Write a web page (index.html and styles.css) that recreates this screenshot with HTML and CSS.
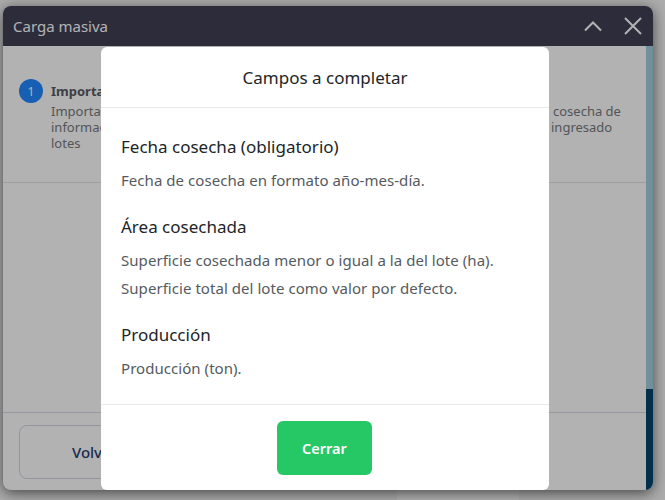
FILE: index.html
```html
<!DOCTYPE html>
<html lang="es">
<head>
<meta charset="utf-8">
<title>Carga masiva</title>
<link rel="stylesheet" href="styles.css">
</head>
<body>
<div class="ghost"></div>
<div class="desktop">
  <div class="window">
    <header class="window-head">
      <span class="window-title">Carga masiva</span>
      <div class="window-actions">
        <svg class="icon" width="20" height="20" viewBox="0 0 20 20"><path d="M2 14.5 10 6.5 18 14.5" fill="none" stroke="#fff" stroke-width="2"/></svg>
        <svg class="icon" width="20" height="20" viewBox="0 0 20 20"><path d="M2 2 18 18M18 2 2 18" fill="none" stroke="#fff" stroke-width="2"/></svg>
      </div>
    </header>
    <div class="window-body">
      <div class="main">
        <div class="steps">
          <div class="step">
            <span class="step-num">1</span>
            <div class="step-text">
              <strong class="step-title">Importar</strong>
              <p class="step-desc">Importar archivo con<br>información de los<br>lotes</p>
            </div>
          </div>
          <p class="step-right"><span class="step-line">cosecha de</span><br>ingresado</p>
        </div>
        <div class="content"></div>
        <div class="foot">
          <button class="btn-back">Volver</button>
        </div>
      </div>
      <div class="scrollbar"><div class="thumb"></div></div>
    </div>
  </div>
</div>
<div class="backdrop"></div>
<div class="modal">
  <div class="modal-head">Campos a completar</div>
  <div class="modal-body">
    <h3 class="field">Fecha cosecha (obligatorio)</h3>
    <p class="desc">Fecha de cosecha en formato año-mes-día.</p>
    <h3 class="field">Área cosechada</h3>
    <p class="desc">Superficie cosechada menor o igual a la del lote (ha).</p>
    <p class="desc">Superficie total del lote como valor por defecto.</p>
    <h3 class="field">Producción</h3>
    <p class="desc">Producción (ton).</p>
  </div>
  <div class="modal-foot"><button class="btn-close">Cerrar</button></div>
</div>
</body>
</html>
```

FILE: styles.css
```css
* { box-sizing: border-box; }
html, body { margin: 0; height: 100%; }
body {
  width: 665px;
  height: 500px;
  overflow: hidden;
  position: relative;
  font-family: "Noto Sans", sans-serif;
  background: #f6f6f6;
}
.ghost { position: absolute; left: 397px; top: 486px; width: 122px; height: 14px; background: #fff; }
.desktop { position: relative; height: 500px; padding: 6px 12px 10px 3px; }
.window {
  height: 484px;
  display: flex;
  flex-direction: column;
  border-radius: 8px;
  overflow: hidden;
  box-shadow: 0 3px 14px rgba(0,0,0,.6);
  background: #fff;
}
.window-head {
  height: 40px;
  flex: none;
  background: #404055;
  color: #fff;
  display: flex;
  align-items: center;
  justify-content: space-between;
  padding: 0 10px;
}
.window-title { font-size: 15px; }
.window-actions { display: flex; gap: 20px; }
.window-body { flex: 1; display: flex; min-height: 0; }
.main { flex: 1; display: flex; flex-direction: column; }
.steps {
  height: 137px;
  padding: 33px 16px 0;
  display: flex;
  justify-content: space-between;
  border-bottom: 1px solid #e2e2e2;
}
.step { display: flex; gap: 8px; }
.step-num {
  width: 24px; height: 24px; border-radius: 50%;
  background: #1583ff; color: #fff; font-size: 12px; opacity: .95;
  display: flex; align-items: center; justify-content: center;
}
.step-title { font-size: 13px; color: #5a5a64; line-height: 24px; display: block; }
.step-desc, .step-right { margin: 0; font-size: 13px; line-height: 16px; color: #777a80; }
.step-right { margin-top: 24px; width: 79px; }
.step-line { margin-left: 2px; }
.content { flex: 1; }
.foot { height: 78px; border-top: 1px solid #d8d8e4; padding: 12px 16px; }
.btn-back {
  width: 151px; height: 54px; background: #fff; border: 1px solid #d4d4e0; border-radius: 8px;
  font: 500 15px "Noto Sans", sans-serif; color: #2a3a72;
}
.scrollbar { width: 7px; background: #a3cee3; position: relative; }
.thumb { position: absolute; left: 0; right: 0; bottom: 0; top: 343px; background: #04466c; }
.backdrop { position: absolute; inset: 0; background: rgba(0,0,0,.3); }
.modal {
  position: absolute; left: 101px; top: 47px; width: 448px; height: 443px;
  background: #fff; border-radius: 6px;
  display: flex; flex-direction: column;
}
.modal-head {
  height: 61px; flex: none; display: flex; align-items: center; justify-content: center;
  font-size: 17px; color: #212529; border-bottom: 1px solid #e9e9e9;
}
.modal-body { flex: 1; padding: 27px 20px 0; }
.field { margin: 0 0 11px; font-size: 17px; font-weight: 400; line-height: 24px; color: #212529; }
.desc { margin: 0 0 8px; font-size: 15px; line-height: 20px; color: #555a60; letter-spacing: .05px; }
.desc + .field { margin-top: 25px; }
.modal-foot {
  height: 86px; flex: none; border-top: 1px solid #e9e9e9;
  display: flex; align-items: center; justify-content: center; padding-right: 1px;
}
.btn-close {
  width: 95px; height: 54px; border: 0; border-radius: 6px; background: #26c765; color: #fff;
  font: 600 14.5px "Noto Sans", sans-serif;
}
```
